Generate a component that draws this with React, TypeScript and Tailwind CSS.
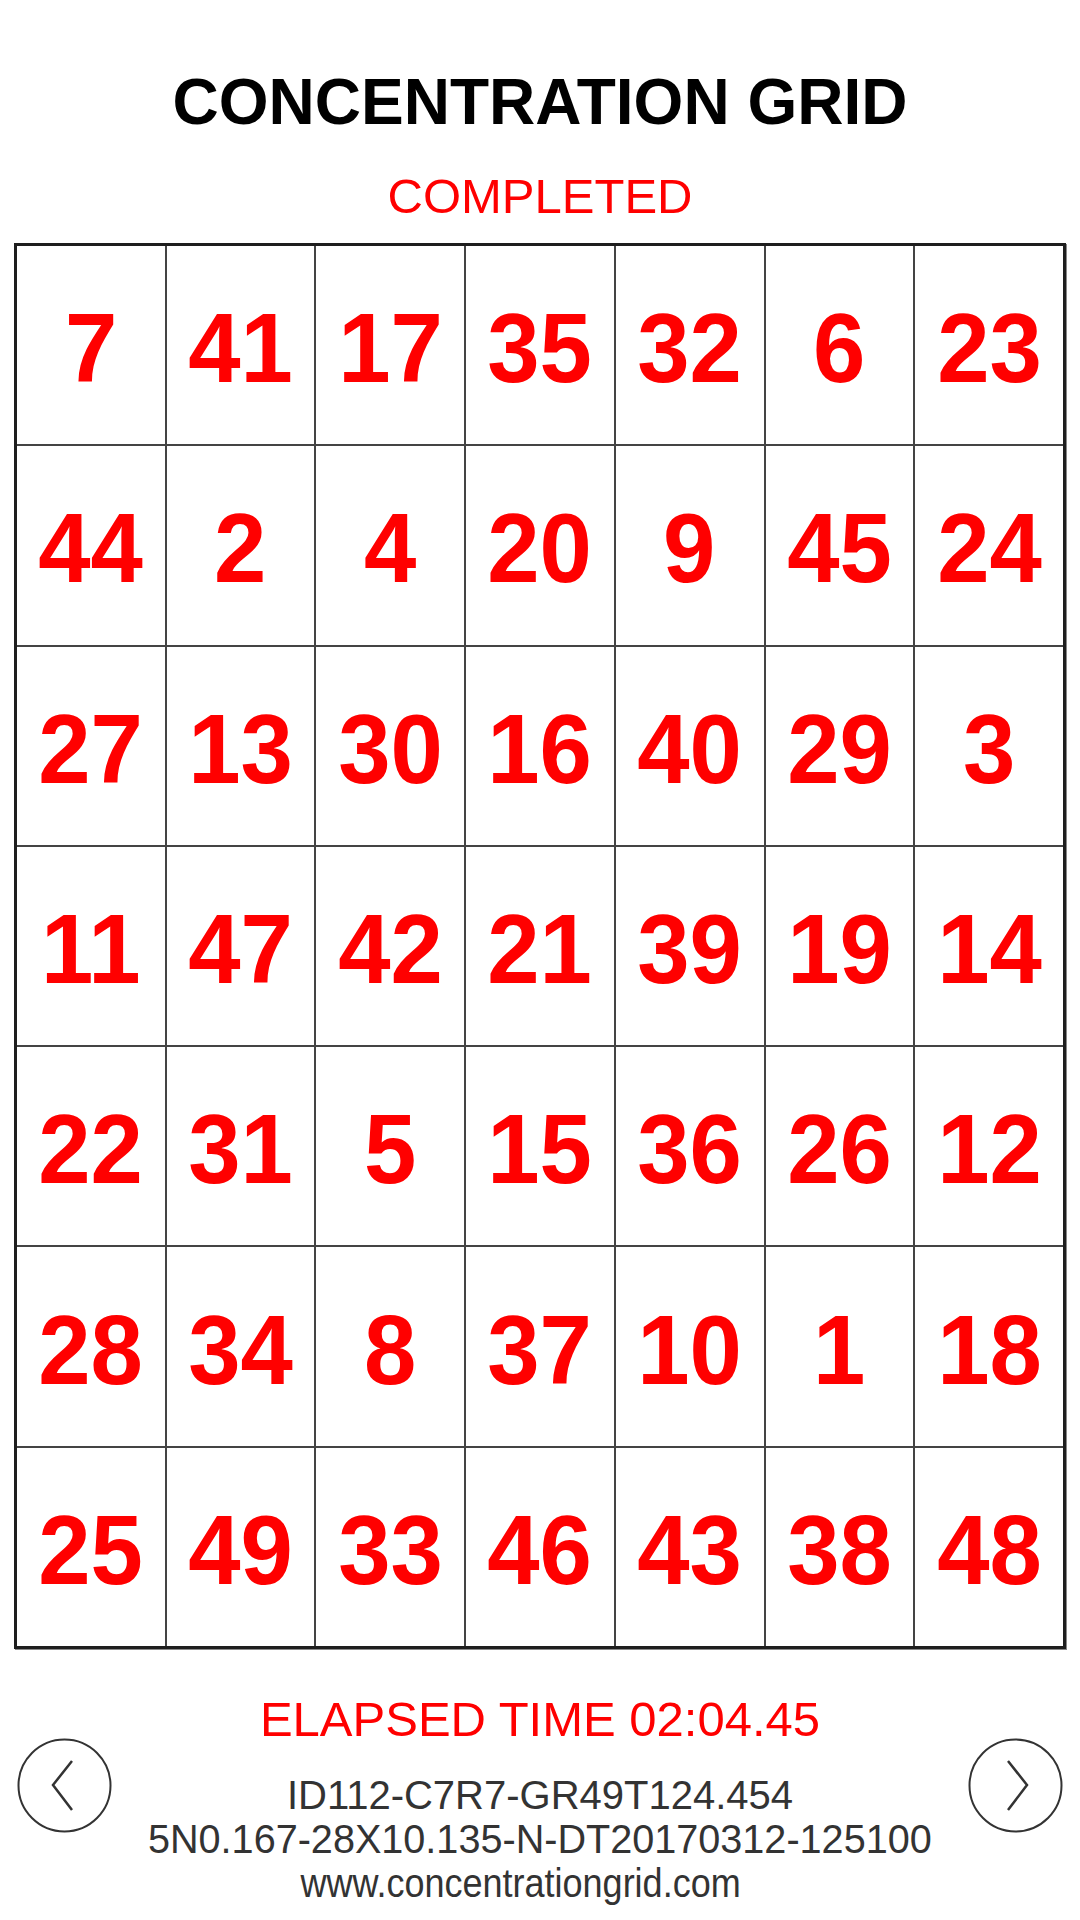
import React from "react";

const numbers = [
  [7, 41, 17, 35, 32, 6, 23],
  [44, 2, 4, 20, 9, 45, 24],
  [27, 13, 30, 16, 40, 29, 3],
  [11, 47, 42, 21, 39, 19, 14],
  [22, 31, 5, 15, 36, 26, 12],
  [28, 34, 8, 37, 10, 1, 18],
  [25, 49, 33, 46, 43, 38, 48],
];

function NavButton({ dir }: { dir: "left" | "right" }) {
  const points = dir === "left" ? "55,23 36,47 55,72" : "40,23 59,47 40,72";
  return (
    <div className="mt-[47px] w-[95px] h-[95px] shrink-0">
      <svg width="95" height="95" viewBox="0 0 95 95">
        <circle cx="47.5" cy="47.5" r="46" fill="none" stroke="#333" strokeWidth="2" />
        <polyline points={points} fill="none" stroke="#333" strokeWidth="2.5" />
      </svg>
    </div>
  );
}

export default function App() {
  return (
    <div className="w-[1080px] h-[1920px] bg-white flex flex-col items-center font-['Liberation_Sans',Arial,sans-serif] overflow-hidden">
      {/* Header */}
      <h1 className="pt-[66px] text-[64px] leading-[72px] font-bold text-black">CONCENTRATION GRID</h1>
      <p className="mt-[30px] text-[49px] leading-[56px] text-[#ff0000]">COMPLETED</p>

      {/* Grid */}
      <div className="mt-[19px] w-[1052px] h-[1406px] border-[3px] border-[#1e1e1e] shadow-[1px_1px_0_#888] bg-[#444] grid grid-cols-7 grid-rows-7 gap-[2px]">
        {numbers.flat().map((n, i) => (
          <div key={i} className="bg-white flex items-center justify-center pt-[6px]">
            <span className="inline-block scale-x-96 text-[98px] leading-none font-bold text-[#ff0000]">{n}</span>
          </div>
        ))}
      </div>

      {/* Footer */}
      <div className="w-full flex items-start px-[17px] mt-[42px]">
        <NavButton dir="left" />
        <div className="flex-1 flex flex-col items-center">
          <p className="text-[49px] leading-[56px] text-[#ff0000]">ELAPSED TIME 02:04.45</p>
          <div className="mt-[26px] text-[40px] leading-[44px] text-[#333] flex flex-col items-center">
            <p>ID112-C7R7-GR49T124.454</p>
            <p className="inline-block scale-x-99">5N0.167-28X10.135-N-DT20170312-125100</p>
            <p className="inline-block scale-x-90 mr-[38px]">www.concentrationgrid.com</p>
          </div>
        </div>
        <NavButton dir="right" />
      </div>
    </div>
  );
}
